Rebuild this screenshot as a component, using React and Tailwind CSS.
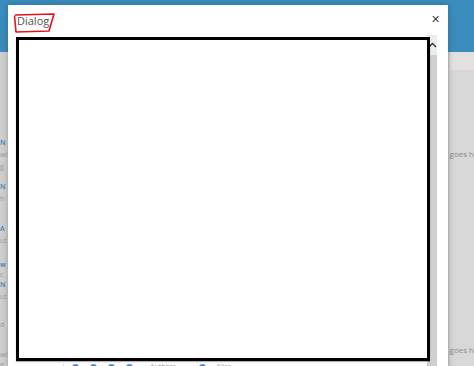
import React from 'react';

const leftBits = [
  { t: 'N', c: 'text-[#3b7fc4] font-semibold', y: 'mt-[86px]' },
  { t: 'wi', c: 'text-[#999]', y: 'mt-[2px]' },
  { t: 'g', c: 'text-[#999]', y: 'mt-[2px]' },
  { t: 'N', c: 'text-[#3b7fc4] font-semibold', y: 'mt-[10px]' },
  { t: 'h', c: 'text-[#999]', y: 'mt-[2px]' },
  { t: 'A', c: 'text-[#3b7fc4] font-semibold', y: 'mt-[20px]' },
  { t: 'ut', c: 'text-[#999]', y: 'mt-[2px]' },
  { t: 'w', c: 'text-[#3b7fc4] font-semibold', y: 'mt-[14px]' },
  { t: 'c', c: 'text-[#999]', y: 'mt-[0px]' },
  { t: 'N', c: 'text-[#3b7fc4] font-semibold', y: 'mt-[0px]' },
  { t: 'ut', c: 'text-[#999]', y: 'mt-[2px]' },
  { t: 'd', c: 'text-[#999]', y: 'mt-[18px]' },
  { t: 'wi', c: 'text-[#999]', y: 'mt-[20px]' },
  { t: 'g', c: 'text-[#999]', y: 'mt-[0px]' },
];

export default function App() {
  return (
    <div
      className="relative w-[474px] h-[366px] overflow-hidden bg-[#d6d6d6]"
      style={{ fontFamily: '"Open Sans", "Noto Sans", sans-serif' }}
    >
      {/* page behind the dialog */}
      <div className="h-[52px] bg-[#3a8dbd]" />
      <div className="flex h-[314px]">
        <div className="w-[9px] bg-[#cfcfcf] flex flex-col text-[7px] leading-[10px] overflow-hidden">
          {leftBits.map((b, i) => (
            <span key={i} className={`${b.c} ${b.y}`}>{b.t}</span>
          ))}
        </div>
        <div className="flex-1" />
        <div className="w-[27px] flex">
          <div className="w-[4px] bg-gradient-to-r from-[#bdbdbd] to-[#d4d4d4]" />
          <div className="flex-1 flex flex-col bg-[#d8d8d8]">
            <div className="h-[18px] bg-[#e4e0e0]" />
            <span className="mt-[78px] text-[8px] text-[#8a8a8a] whitespace-nowrap">goes h</span>
            <span className="mt-[184px] text-[8px] text-[#8a8a8a] whitespace-nowrap">goes h</span>
          </div>
        </div>
      </div>

      {/* dialog */}
      <div className="absolute left-[8px] top-[5px] w-[440px] h-[380px] bg-white shadow-[0_0_6px_rgba(0,0,0,0.25)] flex flex-col">
        <div className="relative h-[30px] flex items-center justify-between pl-[9px] pr-[8px]">
          <span className="text-[11px] text-[#555] mt-[3px]">Dialog</span>
          <svg className="absolute left-[5px] top-[7px]" width="42" height="22" viewBox="0 0 42 22" fill="none">
            <path d="M2 3 L41 2 L36 19 L3 20 L1.5 3.5" stroke="#e0141b" strokeWidth="1.6" strokeLinejoin="round" />
          </svg>
          <span className="text-[11px] leading-none text-[#444] mt-[-4px]">✕</span>
        </div>
        <div className="flex flex-1">
          <div className="flex-1 flex flex-col justify-end pl-[55px] pb-[15px]">
            <div className="flex items-center gap-[11px] h-[6px] border-l border-[#ddd] pl-[8px]">
              <span className="w-[7px] h-[7px] rounded-full bg-[#5b86c6]" />
              <span className="w-[7px] h-[7px] rounded-full bg-[#5b86c6]" />
              <span className="w-[7px] h-[7px] rounded-full bg-[#5b86c6]" />
              <span className="w-[7px] h-[7px] rounded-full bg-[#5b86c6]" />
              <span className="text-[7px] text-[#999] ml-[6px]">Authors</span>
              <span className="w-[7px] h-[7px] rounded-full bg-[#5b86c6] ml-[12px]" />
              <span className="text-[7px] text-[#999]">Nice</span>
            </div>
          </div>
          <div className="w-[10px] mr-[11px] flex flex-col">
            <div className="h-[20px] bg-[#ececec] flex items-center justify-center">
              <svg width="9" height="6" viewBox="0 0 9 6" fill="none">
                <path d="M1 5 L4.5 1.5 L8 5" stroke="#333" strokeWidth="1.4" />
              </svg>
            </div>
            <div className="flex-1 bg-[#cfcfcf]" />
          </div>
        </div>
      </div>

      {/* annotation box */}
      <div className="absolute left-[16px] top-[37px] w-[414px] h-[324px] bg-white border-[3px] border-black shadow-[0_1px_1px_rgba(0,0,0,0.3)]" />
    </div>
  );
}
